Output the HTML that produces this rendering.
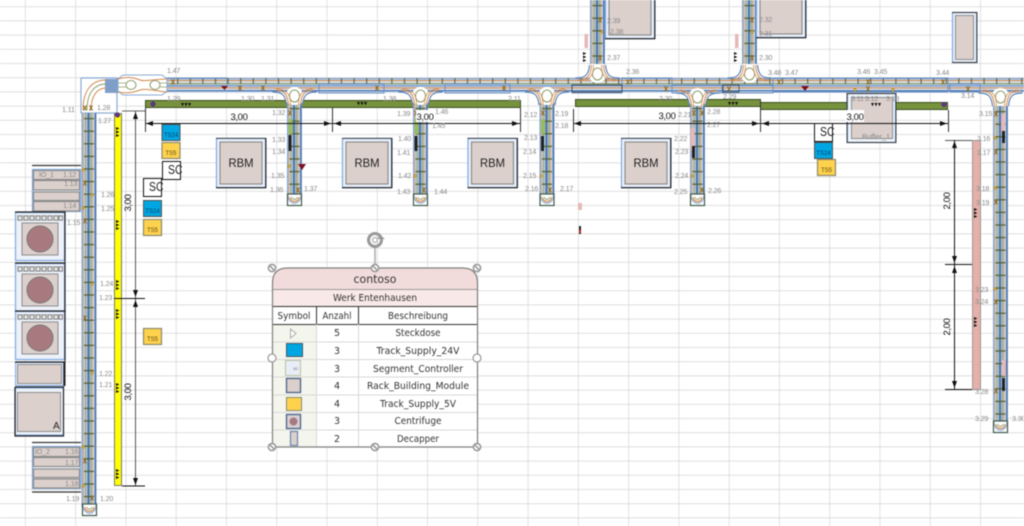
<!DOCTYPE html>
<html><head><meta charset="utf-8">
<style>
html,body{margin:0;padding:0;background:#fff;width:1024px;height:526px;overflow:hidden}
svg{display:block;font-family:"Liberation Sans",sans-serif;filter:blur(.45px)}
.l text{font-size:7.2px;letter-spacing:-.2px;fill:#8a8a8a}
.t text{font-family:"DejaVu Sans",sans-serif;font-size:9.5px;fill:#333;text-anchor:middle}
.d text{font-size:9.5px;letter-spacing:-.35px;fill:#111}
</style></head><body>
<svg width="1024" height="526" viewBox="0 0 1024 526" xmlns="http://www.w3.org/2000/svg">
<defs>
<pattern id="grid" width="50.27" height="14.2" patternUnits="userSpaceOnUse" patternTransform="translate(25,6.3)">
<path d="M0 0V14.2M0 0H50.27" stroke="#d4d4d4" stroke-width="1.4" fill="none"/>
</pattern>
<pattern id="vt" width="15" height="12.6" patternUnits="userSpaceOnUse">
<rect width="15" height="12.6" fill="#c9daee"/>
<rect x="0" width="1.2" height="12.6" fill="#7d9fd0"/>
<rect x="1.6" width="1" height="12.6" fill="#dba678"/>
<rect x="3.6" width="1.1" height="12.6" fill="#8f9f6c"/>
<rect x="5.8" width="2.4" height="12.6" fill="#4f78b0"/>
<rect x="9" width="1.1" height="12.6" fill="#8f9f6c"/>
<rect x="10.6" width="1" height="12.6" fill="#dba678"/>
<rect x="13" width="1.8" height="12.6" fill="#4f78b0"/>
<rect x="2.5" y="5" width="10" height="1.2" fill="#4f5a30"/>
</pattern>
<pattern id="ht" width="12.6" height="15" patternUnits="userSpaceOnUse">
<rect width="12.6" height="15" fill="#d6e2f0"/>
<rect y="0" width="12.6" height="1.3" fill="#7d9fd0"/>
<rect y="2" width="12.6" height="1.1" fill="#d0894f"/>
<rect y="5" width="12.6" height="1.3" fill="#8f9f6c"/>
<rect y="7" width="12.6" height="1.6" fill="#7d9fd0"/>
<rect y="9.4" width="12.6" height="1.1" fill="#d0894f"/>
<rect y="12" width="12.6" height="1.6" fill="#5a82b8"/>
<rect x="6" y="0" width="1" height="6" fill="#4f5a30"/>
</pattern>
<g id="jd">
<path d="M-9 9C-9 0-5-3 0-3S9 0 9 9C9 14 3 15 0 15S-9 14-9 9Z" fill="#fff" stroke="none"/>
<ellipse cx="0" cy="6" rx="5" ry="6" fill="#fff" stroke="#8f9f6c" stroke-width="1"/>
<path d="M-20 0C-10 0-7 4-6 15M20 0C10 0 7 4 6 15" fill="none" stroke="#d0894f" stroke-width="1"/>
<path d="M-18-1C-11-1-4 1-4 15M18-1C11-1 4 1 4 15" fill="none" stroke="#d0894f" stroke-width=".7"/>
<path d="M-22 2C-12 2-9 5-8 15M22 2C12 2 9 5 8 15" fill="none" stroke="#5a82b8" stroke-width="1.2"/>
</g>
<g id="en">
<rect x="0" y="0" width="15" height="12" fill="#fff"/>
<path d="M3 3C3 9 12 9 12 3" fill="none" stroke="#d0894f" stroke-width="1.2"/>
<path d="M5 3C5 6 10 6 10 3" fill="none" stroke="#8f9f6c"/>
<path d="M1 1C1 12 14 12 14 1" fill="none" stroke="#7d9fd0"/>
<rect x=".5" y="0" width="14" height="11.5" fill="none" stroke="#3f5a4a" stroke-width="1.2"/>
</g>
<g id="rbm">
<rect x=".5" y=".5" width="49" height="49" fill="#edf2fa" stroke="#7da7e0" stroke-width="1.2"/>
<rect x="4" y="4" width="42" height="42" fill="#dcd0cc" stroke="#8c8c8c" stroke-width="1.2"/>
<path d="M0 .3H50V49.7H0" fill="none" stroke="#333" stroke-width=".8"/>
<path d="M49.8 0V50M0 49.8H50" stroke="#222" stroke-width="1" fill="none"/>
</g>
<g id="cf">
<rect x=".5" y=".5" width="49" height="48" fill="#edf2fa" stroke="#7da7e0" stroke-width="1.2"/>
<path d="M0 0H50V49" fill="none" stroke="#222" stroke-width="1.2"/>
<rect x="2" y="3" width="46" height="6" fill="#cfd2d6"/>
<g fill="#e6e6e6" stroke="#777" stroke-width=".8"><rect x="3" y="4" width="4" height="4"/><rect x="9" y="4" width="4" height="4"/><rect x="15" y="4" width="4" height="4"/><rect x="21" y="4" width="4" height="4"/><rect x="27" y="4" width="4" height="4"/><rect x="33" y="4" width="4" height="4"/><rect x="39" y="4" width="4" height="4"/><rect x="44" y="4" width="3.6" height="4"/></g>
<rect x="7" y="11" width="36" height="32" fill="#dcd0cc" stroke="#8c8c8c"/>
<circle cx="25" cy="27" r="13" fill="#a87a80" stroke="#777"/>
</g>
<g id="t3"><path d="M0 0h3l-1.5 3.4zM3.5 0h3l-1.5 3.4zM7 0h3l-1.5 3.4z" fill="#111"/></g>
<g id="m1"><path d="M-1.5-2.5L1.5 2.5M1.5-2.5L-1.5 2.5" stroke="#8f6b20" stroke-width="1.2"/></g>
<circle id="m2" r="1.4" fill="#e0b030" stroke="#9a8030" stroke-width=".5"/>
<g id="ts24"><rect x=".5" y=".5" width="18" height="16" fill="#00a6e2" stroke="#555" stroke-width="1"/><text x="9.5" y="13" font-size="6" fill="#003f6a" text-anchor="middle">TS24</text></g>
<g id="ts5"><rect x=".5" y=".5" width="18" height="16" fill="#ffd24d" stroke="#8a8a70" stroke-width="1.2"/><text x="9.5" y="13" font-size="6" fill="#5a4a10" text-anchor="middle">TS5</text></g>
<g id="sc"><rect x=".5" y=".5" width="18" height="18" fill="#fff" stroke="#111" stroke-width="1"/><text x="6" y="13" font-size="13" fill="#222" textLength="14.5" lengthAdjust="spacingAndGlyphs">SC</text></g>
<g id="hd"><circle r="3.6" fill="#fff" stroke="#9a9a9a" stroke-width="1.6"/><path d="M-2.4-2.4L2.4 2.4" stroke="#9a9a9a" stroke-width="1.6"/></g>
</defs>

<rect width="1024" height="526" fill="#fff"/>
<rect width="1024" height="526" fill="url(#grid)"/>

<!-- main horizontal track -->
<g transform="translate(83,78)"><rect x="0" y="0" width="941" height="15" fill="url(#ht)"/></g>
<g fill="none" stroke="#6a8fc2" stroke-width="1">
<rect x="167" y="78" width="60" height="8"/><rect x="319" y="84" width="65" height="9"/><rect x="445" y="84" width="65" height="9"/>
<rect x="622" y="78" width="50" height="8"/><rect x="572" y="85" width="50" height="8"/><rect x="672" y="85" width="50" height="8"/>
<rect x="723" y="85" width="50" height="8"/><rect x="773" y="78" width="175" height="14"/><rect x="950" y="84" width="30" height="8"/>
</g>
<path d="M572 85h50v7h-50zM723 85h16v7h-16z" fill="none" stroke="#333" stroke-width=".7"/>

<!-- corner -->
<rect x="81" y="78" width="36" height="35" fill="#fff" stroke="#8aa9d4" stroke-width="1.2"/>
<rect x="105" y="79" width="13" height="14" fill="#7f9fc9"/>
<path d="M83 110C83 90 92 80 106 80" fill="none" stroke="#d0894f" stroke-width="1"/>
<path d="M87 110C87 92 95 84 106 84" fill="none" stroke="#8f9f6c" stroke-width="1"/>
<path d="M91 110C91 96 97 88 106 88" fill="none" stroke="#d0894f" stroke-width="1"/>
<!-- station -->
<path d="M118 79l5-4h39l5 4v12l-5 4h-39l-5-4z" fill="#fff" stroke="#8aa9d4" stroke-width="1"/>
<path d="M118 83H126M167 83H160M118 87H126M167 87H160" stroke="#8f9f6c" stroke-width=".8"/>
<path d="M126 85a5 4.5 0 1 0 10 0a5 4.5 0 1 0-10 0M150 85a5 4.5 0 1 0 10 0a5 4.5 0 1 0-10 0" fill="#fff" stroke="#8f9f6c" stroke-width="1"/>
<path d="M118 79C128 76 135 78 140 80S155 79 167 79M118 92C128 94 135 92 140 90S155 91 167 92" fill="none" stroke="#d0894f" stroke-width="1"/>

<!-- green bars -->
<g fill="#76923c" stroke="#3f4d22" stroke-width="1">
<rect x="145.500" y="100.500" width="375" height="7"/>
<rect x="575.500" y="99.500" width="185" height="7"/>
<rect x="760.500" y="102.500" width="187" height="7"/>
</g>
<circle cx="153" cy="104" r="2.300" fill="#6a2fa0" stroke="#333" stroke-width=".5"/>
<circle cx="944" cy="104.500" r="2.300" fill="#6a2fa0" stroke="#333" stroke-width=".5"/>

<!-- vertical tracks -->
<g transform="translate(81.500,113)"><rect width="15" height="394" fill="url(#vt)"/></g>
<use href="#en" x="82" y="504"/>
<g transform="translate(287,103)"><rect width="15" height="92" fill="url(#vt)"/></g><use href="#en" x="287" y="194"/><use href="#jd" x="294.500" y="90"/>
<g transform="translate(413,103)"><rect width="15" height="92" fill="url(#vt)"/></g><use href="#en" x="413" y="194"/><use href="#jd" x="420.500" y="90"/>
<g transform="translate(539.500,103)"><rect width="15" height="92" fill="url(#vt)"/></g><use href="#en" x="539.500" y="194"/><use href="#jd" x="547" y="90"/>
<g transform="translate(690,103)"><rect width="15" height="92" fill="url(#vt)"/></g><use href="#en" x="690" y="194"/><use href="#jd" x="697.500" y="91"/>
<g transform="translate(993,106)"><rect width="15" height="315" fill="url(#vt)"/></g><use href="#en" x="993" y="421"/><use href="#jd" x="1000.500" y="91"/>
<g transform="translate(590,0)"><rect width="15" height="64" fill="url(#vt)"/></g><use href="#jd" transform="translate(597.500,80) scale(1,-1)"/>
<g transform="translate(742,0)"><rect width="15" height="64" fill="url(#vt)"/></g><use href="#jd" transform="translate(749.500,80) scale(1,-1)"/>

<!-- track markers -->
<g>
<use href="#m1" x="85" y="108"/><use href="#m1" x="91" y="108"/><use href="#m2" x="83" y="170"/><use href="#m1" x="85" y="183"/><use href="#m2" x="92" y="195"/><use href="#m2" x="83" y="208"/><use href="#m1" x="85" y="221"/><use href="#m2" x="92" y="284"/><use href="#m1" x="85" y="318"/><use href="#m2" x="92" y="373"/><use href="#m2" x="83" y="447"/><use href="#m1" x="85" y="461"/><use href="#m2" x="83" y="486"/><use href="#m1" x="92" y="498"/>
<rect x="288.500" y="119" width="4" height="15" fill="#9bbb59"/><rect x="288.500" y="135" width="3" height="16" fill="#222"/><use href="#m2" x="289" y="166"/><use href="#m1" x="298" y="190"/><use href="#m1" x="290" y="113"/>
<rect x="414.500" y="119" width="4" height="15" fill="#9bbb59"/><rect x="414.500" y="136" width="3" height="15" fill="#222"/><use href="#m2" x="415" y="176"/><use href="#m1" x="424" y="190"/><use href="#m1" x="416" y="113"/>
<rect x="541" y="119" width="4" height="15" fill="#9bbb59"/><rect x="541" y="136" width="3" height="15" fill="#222"/><use href="#m2" x="541" y="176"/><use href="#m1" x="550" y="190"/><use href="#m1" x="543" y="113"/>
<rect x="690.500" y="128" width="4" height="22" fill="#e6b8b7"/><rect x="692" y="146" width="3" height="12" fill="#222"/><use href="#m1" x="694" y="113"/><use href="#m1" x="702" y="113"/><use href="#m2" x="692" y="176"/><use href="#m1" x="702" y="190"/>
<rect x="1001" y="114" width="4" height="20" fill="#e6b8b7"/><rect x="1002" y="131" width="3" height="12" fill="#222"/><use href="#m1" x="996" y="114"/><use href="#m2" x="995" y="138"/><use href="#m1" x="996" y="152"/><use href="#m2" x="995" y="188"/><use href="#m1" x="996" y="202"/><use href="#m2" x="995" y="289"/><use href="#m1" x="996" y="302"/>
<rect x="1002" y="360" width="4" height="16" fill="#e6b8b7"/><rect x="1002" y="378" width="3" height="13" fill="#222"/><use href="#m1" x="996" y="391"/>
<use href="#m1" x="600" y="20"/><use href="#m2" x="602" y="32"/><use href="#m1" x="600" y="58"/><use href="#m1" x="752" y="20"/><use href="#m2" x="752" y="32"/><use href="#m1" x="752" y="58"/>
<rect x="584.500" y="34" width="3.500" height="14" fill="#e6b8b7"/><rect x="735" y="34" width="3.500" height="14" fill="#e6b8b7"/>
<use href="#t3" transform="translate(583,62) rotate(-90)"/><use href="#t3" transform="translate(734,62) rotate(-90)"/>
<rect x="578" y="203" width="4" height="7" fill="#e6b8b7"/><path d="M579 226h2v8h-2z" fill="#222"/><path d="M579 230h2v3h-2z" fill="#c02020"/>
<path d="M221 86h7l-3.500 4z" fill="#7a1020"/><path d="M801 86h8l-4 5z" fill="#7a1020"/><path d="M298 164h8l-4 6z" fill="#7a1020"/>
<use href="#m1" x="173" y="82"/><use href="#m1" x="240" y="88"/><use href="#m1" x="263" y="88"/><use href="#m1" x="377" y="88"/><use href="#m1" x="504" y="88"/><use href="#m1" x="628" y="82"/><use href="#m1" x="666" y="89"/><use href="#m1" x="729" y="89"/><use href="#m1" x="779" y="82"/><use href="#m1" x="868" y="82"/><use href="#m1" x="868" y="89"/><use href="#m1" x="943" y="82"/><use href="#m1" x="968" y="89"/><use href="#m2" x="855" y="90"/><use href="#m2" x="893" y="90"/>
</g>

<!-- yellow bar -->
<rect x="114.500" y="113.500" width="7" height="372" fill="#ffff00" stroke="#777" stroke-width="1"/>
<circle cx="117.500" cy="115" r="2.300" fill="#6a2fa0" stroke="#333" stroke-width=".5"/>
<use href="#t3" transform="translate(116,137) rotate(-90)"/><use href="#t3" transform="translate(116,230) rotate(-90)"/><use href="#t3" transform="translate(116,290) rotate(-90)"/><use href="#t3" transform="translate(116,319) rotate(-90)"/><use href="#t3" transform="translate(116,393) rotate(-90)"/><use href="#t3" transform="translate(116,479) rotate(-90)"/>
<use href="#t3" x="181" y="103"/><use href="#t3" x="357" y="102"/><use href="#t3" x="728" y="102"/>

<!-- dimensions -->
<g stroke="#111" stroke-width="1" fill="none">
<path d="M122 111H145" stroke="#666"/><path d="M135.500 111V486" stroke="#555"/><path d="M114 298.500H145M122 486H145"/>
<path d="M145 123.500H520" /><path d="M145.500 108V132M332.500 108V132M520.500 108V132" stroke="#333"/>
<path d="M573 123.500H948"/><path d="M573.500 109V132M760.500 100V132M948.500 110V132" stroke="#333"/>
<path d="M945 140.500H972" stroke="#555"/><path d="M954.500 140V389"/><path d="M945 264.500H980M945 389.500H972"/>
</g>
<g fill="#111">
<path d="M135.500 112l-2.500 7h5zM135.500 297l-2.500-7h5zM135.500 300l-2.500 7h5zM135.500 485l-2.500-7h5z"/>
<path d="M146 123.500l7-2.500v5zM331 123.500l-7-2.500v5zM334 123.500l7-2.500v5zM519 123.500l-7-2.500v5z"/>
<path d="M574 123.500l7-2.500v5zM759 123.500l-7-2.500v5zM762 123.500l7-2.500v5zM947 123.500l-7-2.500v5z"/>
<path d="M954.500 141l-2.500 7h5zM954.500 263l-2.500-7h5zM954.500 266l-2.500 7h5zM954.500 388l-2.500-7h5z"/>
</g>
<g class="d">
<text x="239" y="120" text-anchor="middle">3,00</text>
<rect x="416" y="110" width="18" height="12" fill="#fff"/>
<text x="425" y="120" text-anchor="middle">3,00</text>
<text x="667" y="119" text-anchor="middle">3,00</text>
<text transform="translate(131,203) rotate(-90)" text-anchor="middle">3,00</text>
<text transform="translate(131,392) rotate(-90)" text-anchor="middle">3,00</text>
<text transform="translate(950,201) rotate(-90)" text-anchor="middle">2,00</text>
<text transform="translate(950,327) rotate(-90)" text-anchor="middle">2,00</text>
</g>
<!-- pink bar -->
<rect x="972.500" y="140.500" width="8" height="249" fill="#e6b0aa" stroke="#999" stroke-width="1"/>
<use href="#t3" transform="translate(974,218) rotate(-90)"/><use href="#t3" transform="translate(974,327) rotate(-90)"/>

<!-- RBMs -->
<use href="#rbm" x="216" y="138"/><use href="#rbm" x="342" y="138"/><use href="#rbm" x="467.500" y="138"/><use href="#rbm" x="621" y="138"/>
<g font-size="12" fill="#222" text-anchor="middle">
<text x="241" y="167" textLength="25" lengthAdjust="spacingAndGlyphs">RBM</text>
<text x="367" y="167" textLength="25" lengthAdjust="spacingAndGlyphs">RBM</text>
<text x="492.500" y="167" textLength="25" lengthAdjust="spacingAndGlyphs">RBM</text>
<text x="646" y="167" textLength="25" lengthAdjust="spacingAndGlyphs">RBM</text>
</g>
<!-- top boxes -->
<use href="#rbm" x="605" y="-11"/><use href="#rbm" x="756" y="-12"/>
<rect x="952.500" y="12.500" width="24" height="50" fill="#edf2fa" stroke="#7da7e0" stroke-width="1.2"/>
<rect x="955.500" y="15.500" width="18" height="44" fill="#dcd0cc" stroke="#8c8c8c"/>
<path d="M952 12.500H977V62.500H952" fill="none" stroke="#333" stroke-width=".9"/>
<!-- buffer -->
<rect x="847.500" y="93.500" width="48" height="49" fill="#edf2fa" stroke="#7da7e0" stroke-width="1.2"/>
<rect x="851.500" y="97.500" width="41" height="41" fill="#dcd0cc" stroke="#8c8c8c"/>
<path d="M847 93.500H896V142.500H847Z" fill="none" stroke="#333" stroke-width=".9"/>
<use href="#t3" x="871" y="103"/>
<path d="M847 123.500H948" stroke="#111"/>
<rect x="846" y="110" width="18" height="12" fill="#fff"/>
<g class="d"><text x="855" y="120" text-anchor="middle">3,00</text></g>
<text x="862" y="139" font-size="7.500" fill="#888">Buffer_1</text>

<!-- SC / TS -->
<use href="#ts24" x="161.500" y="124"/><use href="#ts5" x="161.500" y="142"/><use href="#sc" x="162" y="161"/><use href="#sc" x="143" y="178"/>
<use href="#ts24" x="143" y="200"/><use href="#ts5" x="143" y="219"/><use href="#ts5" x="143" y="328"/>
<use href="#sc" x="814" y="123"/><use href="#ts24" x="814" y="142"/><use href="#ts5" x="817" y="159"/>

<!-- IO blocks -->
<g fill="#dcd0cc" stroke="#8c8c8c" stroke-width="1.200">
<path d="M32 165.500H81" stroke="#333" fill="none"/>
<rect x="32.500" y="169.500" width="48" height="42" fill="#eef2f8" stroke="#7da7e0"/>
<rect x="33.500" y="170.500" width="46" height="9"/><rect x="33.500" y="180.500" width="46" height="9.500"/><rect x="33.500" y="192" width="46" height="8.500"/><rect x="33.500" y="201.500" width="46" height="9.500"/>
<path d="M32 442.500H81M32 492H81" stroke="#333" fill="none"/>
<rect x="32.500" y="446.500" width="48" height="42" fill="#eef2f8" stroke="#7da7e0"/>
<rect x="33.500" y="447.500" width="46" height="9"/><rect x="33.500" y="457.500" width="46" height="9"/><rect x="33.500" y="469" width="46" height="8.500"/><rect x="33.500" y="479" width="46" height="9"/>
</g>

<!-- centrifuges -->
<use href="#cf" x="15" y="212"/><use href="#cf" x="15" y="263"/><use href="#cf" x="15" y="311"/>
<path d="M65 212V386" stroke="#222" stroke-width="1"/>
<rect x="15.500" y="362.500" width="48" height="23" fill="#edf2fa" stroke="#7da7e0"/><rect x="17.500" y="364.500" width="44" height="19" fill="#dcd0cc" stroke="#8c8c8c"/>
<path d="M15 362H64V386" fill="none" stroke="#222" stroke-width="1.200"/>
<rect x="15.500" y="388" width="48" height="47" fill="#edf2fa" stroke="#7da7e0"/><rect x="17.500" y="392.500" width="43" height="39" fill="#dcd0cc" stroke="#8c8c8c"/>
<path d="M15 387V436H63.500V387H15" fill="none" stroke="#222" stroke-width="1.200"/>
<text x="53" y="429" font-size="10" fill="#222">A</text>

<!-- labels -->
<g class="l">
<text x="167" y="73">1.47</text><text x="97" y="110">1.28</text><text x="62" y="112">1.11</text><text x="98" y="123">1.27</text><text x="167" y="101">1.29</text><text x="241" y="101">1.30</text><text x="261" y="101">1.31</text><text x="272" y="115">1.32</text><text x="272" y="142">1.33</text><text x="272" y="154">1.34</text><text x="271" y="178">1.35</text><text x="270" y="192">1.36</text><text x="304" y="191">1.37</text>
<text x="39" y="177">IO_1</text><text x="63" y="177">1.12</text><text x="64" y="186">1.13</text><text x="63" y="208">1.14</text><text x="101" y="197">1.26</text><text x="101" y="211">1.25</text><text x="67" y="225">1.15</text><text x="100" y="286">1.24</text><text x="99" y="300">1.23</text><text x="99" y="376">1.22</text><text x="99" y="387">1.21</text>
<text x="35" y="454">IO_2</text><text x="65" y="454">1.16</text><text x="65" y="465">1.17</text><text x="65" y="486">1.18</text><text x="66" y="501">1.19</text><text x="100" y="501">1.20</text>
<text x="383" y="101">1.38</text><text x="397" y="116">1.39</text><text x="435" y="114">1.46</text><text x="432" y="128">1.45</text><text x="398" y="141">1.40</text><text x="397" y="155">1.41</text><text x="398" y="178">1.42</text><text x="397" y="194">1.43</text><text x="434" y="194">1.44</text>
<text x="508" y="101">2.11</text><text x="524" y="117">2.12</text><text x="555" y="116">2.19</text><text x="555" y="128">2.18</text><text x="524" y="140">2.13</text><text x="523" y="154">2.14</text><text x="523" y="178">2.15</text><text x="525" y="191">2.16</text><text x="560" y="191">2.17</text>
<text x="607" y="23">2.39</text><text x="610" y="34">2.38</text><text x="607" y="60">2.37</text><text x="759" y="22">2.32</text><text x="759" y="36">2.31</text><text x="759" y="60">2.30</text><text x="626" y="74">2.36</text>
<text x="768" y="75">3.48</text><text x="785" y="75">3.47</text><text x="857" y="74">3.46</text><text x="874" y="74">3.45</text><text x="936" y="75">3.44</text>
<text x="659" y="101">2.20</text><text x="723" y="99">2.29</text><text x="961" y="98">3.14</text><text x="678" y="117">2.21</text><text x="707" y="114">2.28</text><text x="707" y="127">2.27</text><text x="674" y="141">2.22</text><text x="675" y="154">2.23</text><text x="675" y="178">2.24</text><text x="674" y="194">2.25</text><text x="708" y="193">2.26</text>
<text x="851" y="101">3.11</text><text x="865" y="101">3.12</text><text x="886" y="101">3.13</text><text x="979" y="116">3.15</text><text x="977" y="141">3.16</text><text x="977" y="155">3.17</text><text x="976" y="191">3.18</text><text x="976" y="205">3.19</text><text x="975" y="292">3.23</text><text x="975" y="304">3.24</text><text x="975" y="394">3.28</text><text x="975" y="421">3.29</text><text x="1012" y="421">3.30</text>
</g>

<!-- table -->
<rect x="272.500" y="268" width="205" height="179" fill="#fff"/>
<path d="M272.500 289V283Q272.500 268 287.500 268H462.500Q477.500 268 477.500 283V289Z" fill="#f2dcdb"/>
<rect x="272.500" y="289" width="205" height="17" fill="#f8e9e8"/>
<rect x="272.500" y="324" width="44" height="123" fill="#f4f5ec"/>
<g stroke="#d8d8d8" stroke-width="1"><path d="M272 342H477M272 359.500H477M272 377H477M272 395H477M272 412.500H477M272 430H477"/></g>
<g stroke="#333" stroke-width="1" fill="none"><path d="M272 306.500H477M272 324.500H477M316.500 306V324M358.500 306V324"/></g>
<path d="M272 289.500H477" stroke="#999"/>
<path d="M316.500 324V447M358.500 324V447" stroke="#d8d8d8"/>
<path d="M272.500 283Q272.500 268 287.500 268H462.500Q477.500 268 477.500 283V447H272.500Z" fill="none" stroke="#808080" stroke-width="1.200"/>
<g class="t">
<text x="375" y="283" style="font-size:11.500px" textLength="43" lengthAdjust="spacingAndGlyphs">contoso</text>
<text x="375" y="301" textLength="84" lengthAdjust="spacingAndGlyphs">Werk Entenhausen</text>
<text x="294" y="319" textLength="33" lengthAdjust="spacingAndGlyphs">Symbol</text>
<text x="337" y="319" textLength="29" lengthAdjust="spacingAndGlyphs">Anzahl</text>
<text x="418" y="319" textLength="60" lengthAdjust="spacingAndGlyphs">Beschreibung</text>
<text x="337" y="336">5</text><text x="418" y="336" textLength="45" lengthAdjust="spacingAndGlyphs">Steckdose</text>
<text x="337" y="354">3</text><text x="418" y="354" textLength="83" lengthAdjust="spacingAndGlyphs">Track_Supply_24V</text>
<text x="337" y="372">3</text><text x="418" y="372" textLength="90" lengthAdjust="spacingAndGlyphs">Segment_Controller</text>
<text x="337" y="389">4</text><text x="418" y="389" textLength="102" lengthAdjust="spacingAndGlyphs">Rack_Building_Module</text>
<text x="337" y="407">4</text><text x="418" y="407" textLength="76" lengthAdjust="spacingAndGlyphs">Track_Supply_5V</text>
<text x="337" y="424">3</text><text x="418" y="424" textLength="47" lengthAdjust="spacingAndGlyphs">Centrifuge</text>
<text x="337" y="442">2</text><text x="418" y="442" textLength="42" lengthAdjust="spacingAndGlyphs">Decapper</text>
</g>
<!-- table icons -->
<path d="M290.500 329L296 333.500L290.500 338Z" fill="#fff" stroke="#aaa" stroke-width="1"/>
<rect x="286.500" y="343.500" width="16" height="13" fill="#00a6e2" stroke="#44586a"/>
<rect x="285.500" y="360.500" width="15" height="15" fill="#e8eef8" stroke="#b5c2a0"/><text x="293" y="370" font-size="4" fill="#667">SC</text>
<rect x="286.500" y="378.500" width="14" height="14" fill="#dcd0cc" stroke="#4a628a" stroke-width="1.300"/>
<rect x="286.500" y="397.500" width="15" height="13" fill="#ffd24d" stroke="#8a8a70"/>
<rect x="286.500" y="414.500" width="14" height="14" fill="#d8d0d4" stroke="#4a628a" stroke-width="1.300"/><circle cx="293.500" cy="421.500" r="4" fill="#a87a80"/>
<rect x="290.500" y="431.500" width="7" height="14" fill="#dcd0cc" stroke="#6a86b0" stroke-width="1.200"/>
<!-- handles -->
<path d="M375 248V268" stroke="#aaa" stroke-width="1.500"/>
<circle cx="375" cy="240" r="6.500" fill="none" stroke="#999" stroke-width="3"/><circle cx="375" cy="240" r="2.500" fill="none" stroke="#999" stroke-width="1"/><path d="M379 234l6 5h-7z" fill="#999"/>
<use href="#hd" x="272" y="268"/><use href="#hd" x="375" y="268"/><use href="#hd" x="477" y="268"/>
<use href="#hd" x="272" y="447"/><use href="#hd" x="375" y="447"/><use href="#hd" x="477" y="447"/>
<circle cx="272" cy="358" r="4" fill="#fff" stroke="#999" stroke-width="1.200"/><circle cx="477" cy="358" r="4" fill="#fff" stroke="#999" stroke-width="1.200"/>
</svg>
</body></html>
